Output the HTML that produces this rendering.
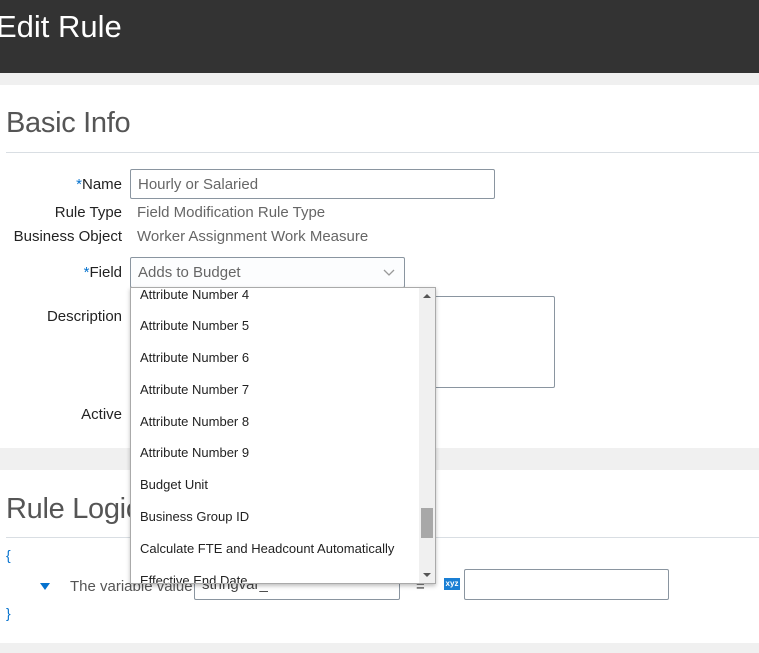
<!DOCTYPE html>
<html><head><meta charset="utf-8"><style>
*{margin:0;padding:0;box-sizing:border-box}
body{width:759px;height:653px;background:#f0f0f0;font-family:"Liberation Sans",sans-serif;position:relative;overflow:hidden}
.a{position:absolute}
.hdr{left:0;top:0;width:759px;height:73px;background:#333}
.hdr span{position:absolute;left:-4px;top:9px;color:#fff;font-size:31px}
.panel{background:#fff;left:0;width:759px}
.h{font-size:29px;color:#555;font-weight:300;letter-spacing:-0.3px}
.line{height:1px;background:#d9dee3;left:6px;width:753px}
.lbl{font-size:15px;color:#222;text-align:right;width:122px;left:0}
.lbl b{color:#0572ce;font-weight:normal}
.val{font-size:15px;color:#666;left:137px}
.inp{border:1px solid #8a95a0;border-radius:2px;background:#fff;font-size:15px;color:#666;padding-left:7px}
.dd{left:130px;top:287px;width:306px;height:297px;background:#fff;border:1px solid #aaa;box-shadow:0 2px 4px rgba(0,0,0,.25);overflow:hidden;z-index:5}
.dd div{position:absolute;left:9px;font-size:13px;color:#222;white-space:nowrap}
.sb{right:0;top:0;width:16px;height:100%;background:#f0f0f0}
</style></head><body>
<div class="a hdr"><span>Edit Rule</span></div>
<div class="a panel" style="top:85px;height:363px"></div>
<div class="a panel" style="top:470px;height:173px"></div>
<div class="a h" style="left:6px;top:107px">Basic Info</div>
<div class="a line" style="top:152px"></div>
<div class="a lbl" style="top:176px"><b>*</b>Name</div>
<div class="a inp" style="left:130px;top:169px;width:365px;height:30px;line-height:29px">Hourly or Salaried</div>
<div class="a lbl" style="top:204px">Rule Type</div>
<div class="a val" style="top:204px">Field Modification Rule Type</div>
<div class="a lbl" style="top:228px">Business Object</div>
<div class="a val" style="top:228px">Worker Assignment Work Measure</div>
<div class="a lbl" style="top:264px"><b>*</b>Field</div>
<div class="a inp" style="left:130px;top:257px;width:275px;height:31px;line-height:30px;background:#fcfdfe">Adds to Budget<svg class="a" style="right:9px;top:11px" width="12" height="8"><path d="M1 1l5 5 5-5" fill="none" stroke="#999" stroke-width="1.3"/></svg></div>
<div class="a lbl" style="top:308px">Description</div>
<div class="a inp" style="left:130px;top:296px;width:425px;height:92px"></div>
<div class="a lbl" style="top:406px">Active</div>
<div class="a h" style="left:6px;top:493px">Rule Logic</div>
<div class="a line" style="top:537px"></div>
<div class="a" style="left:6px;top:547px;font-size:14px;color:#0572ce">{</div>
<div class="a" style="left:40px;top:583px;border:5px solid transparent;border-top:7px solid #0572ce;border-bottom:0"></div>
<div class="a" style="left:70px;top:578px;font-size:15px;color:#555">The variable value</div>
<div class="a inp" style="left:194px;top:569px;width:206px;height:31px;line-height:29px;color:#444">stringvar_</div>
<div class="a" style="left:416px;top:578px;font-size:15px;color:#333">=</div>
<div class="a" style="left:444px;top:578px;width:16px;height:12px;background:#1a7fd4;color:#fff;font-size:8px;font-weight:bold;line-height:12px;text-align:center">xyz</div>
<div class="a inp" style="left:464px;top:569px;width:205px;height:31px"></div>
<div class="a" style="left:6px;top:605px;font-size:14px;color:#0572ce">}</div>
<div class="a dd">
<div style="top:-1px">Attribute Number 4</div>
<div style="top:30px">Attribute Number 5</div>
<div style="top:62px">Attribute Number 6</div>
<div style="top:94px">Attribute Number 7</div>
<div style="top:126px">Attribute Number 8</div>
<div style="top:157px">Attribute Number 9</div>
<div style="top:189px">Budget Unit</div>
<div style="top:221px">Business Group ID</div>
<div style="top:253px">Calculate FTE and Headcount Automatically</div>
<div style="top:285px">Effective End Date</div>
<span class="a sb"></span>
<span class="a" style="right:2px;top:220px;width:12px;height:30px;background:#a8a8a8"></span>
<span class="a" style="right:4px;top:6px;border:4px solid transparent;border-bottom:4px solid #555;border-top:0"></span>
<span class="a" style="right:4px;bottom:6px;border:4px solid transparent;border-top:4px solid #555;border-bottom:0"></span>
</div>
</body></html>
